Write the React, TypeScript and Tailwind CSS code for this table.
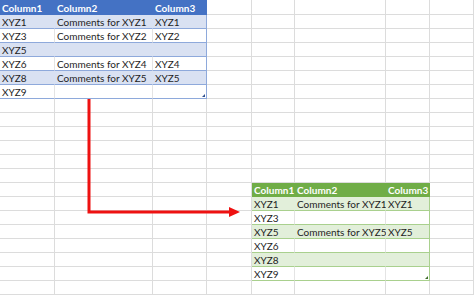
import React from "react";

type Tbl = {
  row0: number;
  col0: number;
  header: string[];
  rows: string[][];
  headBg: string;
  band: string;
  line: string;
  handle: string;
};

const COLS = 8;
const ROWS = 21;

const blue: Tbl = {
  row0: 0,
  col0: 0,
  header: ["Column1", "Column2", "Column3"],
  rows: [
    ["XYZ1", "Comments for XYZ1", "XYZ1"],
    ["XYZ3", "Comments for XYZ2", "XYZ2"],
    ["XYZ5", "", ""],
    ["XYZ6", "Comments for XYZ4", "XYZ4"],
    ["XYZ8", "Comments for XYZ5", "XYZ5"],
    ["XYZ9", "", ""],
  ],
  headBg: "blue",
  band: "blue",
  line: "blue",
  handle: "blue",
};

const green: Tbl = {
  row0: 13,
  col0: 4,
  header: ["Column1", "Column2", "Column3"],
  rows: [
    ["XYZ1", "Comments for XYZ1", "XYZ1"],
    ["XYZ3", "", ""],
    ["XYZ5", "Comments for XYZ5", "XYZ5"],
    ["XYZ6", "", ""],
    ["XYZ8", "", ""],
    ["XYZ9", "", ""],
  ],
  headBg: "green",
  band: "green",
  line: "green",
  handle: "green",
};

function cellInfo(r: number, c: number) {
  for (const t of [blue, green]) {
    const rr = r - t.row0;
    const cc = c - t.col0;
    if (rr >= 0 && rr <= t.rows.length && cc >= 0 && cc < 3) {
      return { t, rr, cc };
    }
  }
  return null;
}

function Cell({ r, c }: { r: number; c: number }) {
  const info = cellInfo(r, c);
  const isBlue = info?.t === blue;
  if (!info) {
    return <div className="border-r border-b border-[#dcdcdc] bg-white" />;
  }
  const { t, rr, cc } = info;
  const lastCol = cc === 2;
  if (rr === 0) {
    return (
      <div
        className={
          "border-b flex items-end pl-[2px] pb-[1px] text-[10px] leading-none font-bold text-white whitespace-nowrap " +
          (isBlue
            ? "bg-[#4472C4] border-[#4472C4] "
            : "bg-[#70AD47] border-[#70AD47] ") +
          (lastCol
            ? isBlue
              ? "border-r border-r-[#4472C4]"
              : "border-r border-r-[#70AD47]"
            : isBlue
              ? "border-r border-r-[#4472C4]"
              : "border-r border-r-[#70AD47]")
        }
      >
        {t.header[cc]}
      </div>
    );
  }
  const banded = rr % 2 === 1;
  const text = t.rows[rr - 1][cc];
  const isLast = rr === t.rows.length;
  let cls =
    "relative flex items-end pl-[2px] pb-[1px] text-[10px] leading-none text-[#1e1e1e] whitespace-nowrap border-b border-r ";
  if (isBlue) {
    cls += banded ? "bg-[#D9E1F2] " : "bg-white ";
    cls += "border-b-[#8EA9DB] ";
    cls += lastCol
      ? "border-r-[#8EA9DB] "
      : banded
        ? "border-r-[#D9E1F2] "
        : "border-r-[#e4e4e4] ";
  } else {
    cls += banded ? "bg-[#E2EFDA] " : "bg-white ";
    cls += "border-b-[#A9D08E] ";
    cls += lastCol
      ? "border-r-[#A9D08E] "
      : banded
        ? "border-r-[#E2EFDA] "
        : "border-r-[#e4e4e4] ";
  }
  return (
    <div className={cls}>
      {text}
      {isLast && lastCol && (
        <div
          className={
            "absolute right-[1px] bottom-[1px] w-0 h-0 border-l-[3px] border-l-transparent border-b-[3px] " +
            (isBlue ? "border-b-[#2F4F8F]" : "border-b-[#3f6f2a]")
          }
        />
      )}
    </div>
  );
}

export default function App() {
  const cells: React.ReactNode[] = [];
  for (let r = 0; r < ROWS; r++) {
    for (let c = 0; c < COLS; c++) {
      cells.push(<Cell key={`${r}-${c}`} r={r} c={c} />);
    }
  }
  return (
    <div
      className="relative w-[474px] h-[295px] overflow-hidden bg-white"
      style={{ fontFamily: "Lato, 'Liberation Sans', sans-serif" }}
    >
      <div className="grid grid-cols-[55px_98px_54px_45px_43px_91px_44px_1fr] grid-rows-[15px_repeat(20,14px)]">
        {cells}
      </div>
      <svg
        className="absolute left-0 top-0"
        width="474"
        height="295"
        viewBox="0 0 474 295"
      >
        <path
          d="M89 99 L89 212 L231 212"
          fill="none"
          stroke="#ee1111"
          strokeWidth="3"
        />
        <polygon points="229,207 240,212 229,217" fill="#ee1111" />
      </svg>
    </div>
  );
}
